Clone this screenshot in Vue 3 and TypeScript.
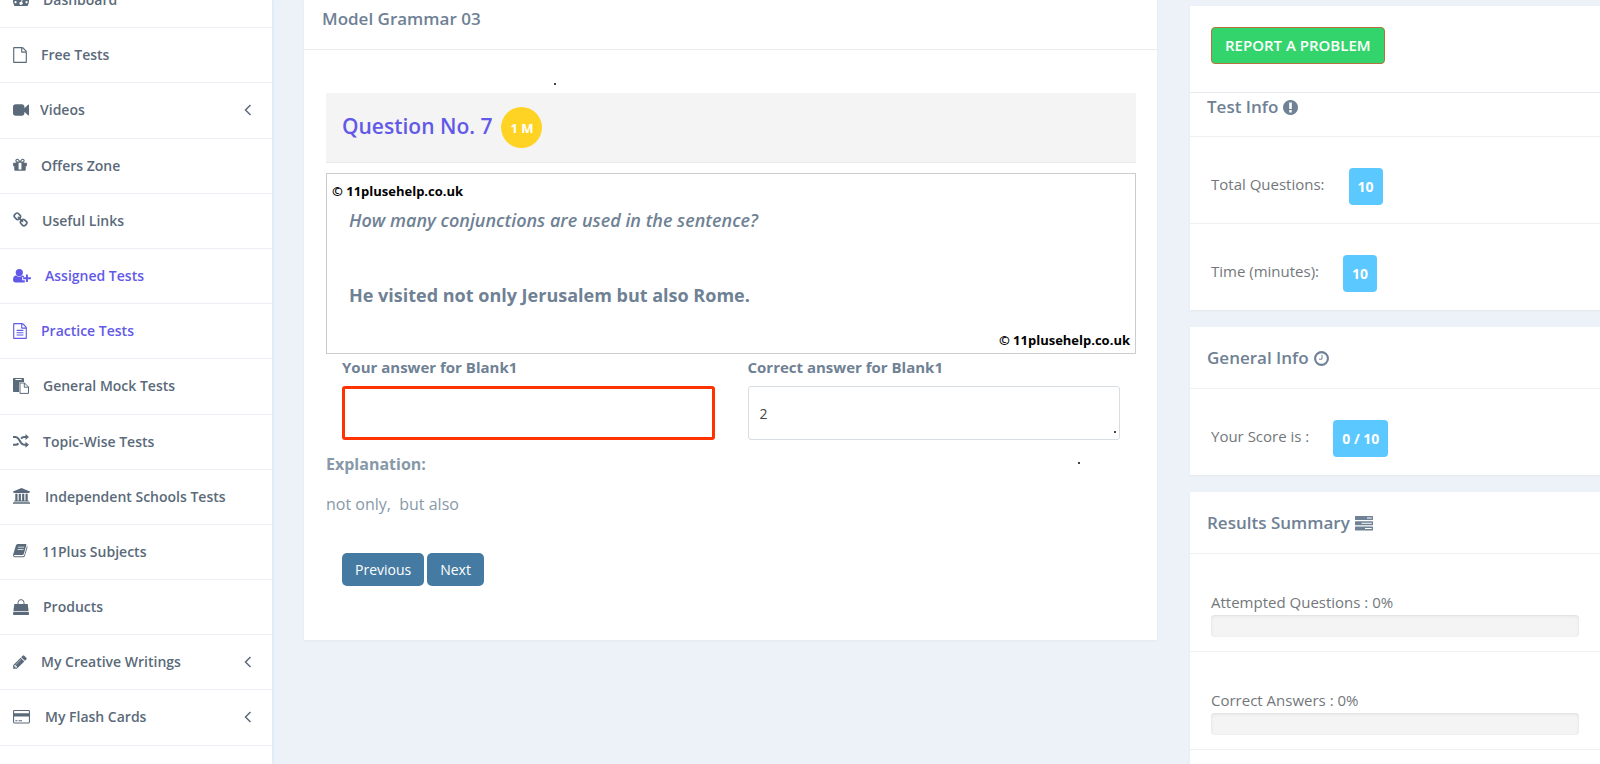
<script setup lang="ts">
interface Shape {
  d: string
  stroke?: number
}
interface MenuItem {
  label: string
  size: string
  box: string
  shapes: Shape[]
  active?: boolean
  expandable?: boolean
  tight?: boolean
}

const page =
  'M1596 380q28 28 48 76t20 88v1152q0 40-28 68t-68 28h-1344q-40 0-68-28t-28-68v-1600q0-40 28-68t68-28h896q40 0 88 20t76 48zm-444-244v376h376q-10-29-22-41l-313-313q-12-12-41-22zm384 1528v-1024h-416q-40 0-68-28t-28-68v-416h-768v1536h1280z'

const menu: MenuItem[] = [
  {
    label: 'Dashboard',
    size: 'w16',
    box: '0 0 16 16',
    shapes: [{ d: 'M8 1a8 8 0 0 0-8 8q0 2.400 1.200 4.400.3.600.8.600h12q.5 0 .8-.6 1.200-2 1.200-4.400a8 8 0 0 0-8-8zM2.500 9a1.100 1.100 0 1 0 .1 0zM4 5a1.100 1.100 0 1 0 .1 0zM8 2.800a1.100 1.100 0 1 0 .1 0zM12 5a1.100 1.100 0 1 0 .1 0zM13.500 9a1.100 1.100 0 1 0 .1 0zM9 6.500l-.8 3.200a1.600 1.600 0 1 0 .8.300l1-3.200z' }],
  },
  { label: 'Free Tests', size: 'w14', box: '128 0 1536 1792', shapes: [{ d: page }] },
  {
    label: 'Videos',
    size: 'w16',
    box: '0 0 1792 1792',
    tight: true,
    expandable: true,
    shapes: [{ d: 'M1792 352v1088q0 42-39 59-13 5-25 5-27 0-45-19l-403-403v166q0 119-84.500 203.500t-203.500 84.500h-704q-119 0-203.500-84.500t-84.500-203.500v-704q0-119 84.500-203.500t203.500-84.500h704q119 0 203.500 84.500t84.500 203.500v165l403-402q18-19 45-19 12 0 25 5 39 17 39 59z' }],
  },
  {
    label: 'Offers Zone',
    size: 'w14',
    box: '128 0 1536 1792',
    shapes: [{ d: 'M1056 1356v-716h-320v716q0 25 18 38.500t46 13.500h192q28 0 46-13.500t18-38.500zm-456-844h195l-126-161q-26-31-69-31-40 0-68 28t-28 68 28 68 68 28zm688-96q0-40-28-68t-68-28q-43 0-69 31l-125 161h194q40 0 68-28t28-68zm376 256v320q0 14-9 23t-23 9h-96v416q0 40-28 68t-68 28h-1088q-40 0-68-28t-28-68v-416h-96q-14 0-23-9t-9-23v-320q0-14 9-23t23-9h440q-93 0-158.500-65.500t-65.500-158.500 65.500-158.500 158.500-65.500q107 0 168 77l128 165 128-165q61-77 168-77 93 0 158.500 65.500t65.500 158.500-65.500 158.500-158.500 65.500h440q14 0 23 9t9 23z' }],
  },
  {
    label: 'Useful Links',
    size: 'w15',
    box: '80 0 1632 1792',
    shapes: [{ d: 'M1520 1216q0-40-28-68l-208-208q-28-28-68-28-42 0-72 32 3 3 19 18.500t21.500 21.500 15 19 13 25.500 3.500 27.500q0 40-28 68t-68 28q-15 0-27.500-3.500t-25.500-13-19-15-21.500-21.500-18.500-19q-33 31-33 73 0 40 28 68l206 207q27 27 68 27 40 0 68-26l147-146q28-28 28-67zm-703-705q0-40-28-68l-206-207q-28-28-68-28-39 0-68 27l-147 146q-28 28-28 67 0 40 28 68l208 208q27 27 68 27 42 0 72-31-3-3-19-18.500t-21.500-21.500-15-19-13-25.500-3.500-27.500q0-40 28-68t68-28q15 0 27.500 3.500t25.500 13 19 15 21.500 21.500 18.500 19q33-31 33-73zm895 705q0 120-85 203l-147 146q-83 83-203 83-121 0-204-85l-206-207q-83-83-83-203 0-123 88-209l-88-88q-86 88-208 88-120 0-204-84l-208-208q-84-84-84-204t85-203l147-146q83-83 203-83 121 0 204 85l206 207q83 83 83 203 0 123-88 209l88 88q86-88 208-88 120 0 204 84l208 208q84 84 84 204z' }],
  },
  {
    label: 'Assigned Tests',
    size: 'w18',
    box: '0 0 18 16',
    active: true,
    shapes: [
      { d: 'M6.300 1a3.600 3.600 0 1 1 0 7.200 3.600 3.600 0 0 1 0-7.200zM3.200 7.600q1.400 1.200 3.100 1.200t3.100-1.200q1 0 1.700.6V9H9.200v3.300h2.600v1.900q-.4.200-.9.200H2.300Q0 14.400 0 12q0-4.300 3.200-4.400z' },
      { d: 'M12.900 6.600h2v2.700h3v2h-3V14h-2v-2.700h-2.800v-2h2.800z' },
    ],
  },
  {
    label: 'Practice Tests',
    size: 'w14',
    box: '128 0 1536 1792',
    active: true,
    shapes: [{ d: page + 'm-1024-864q0-14 9-23t23-9h704q14 0 23 9t9 23v64q0 14-9 23t-23 9h-704q-14 0-23-9t-9-23v-64zm736 224q14 0 23 9t9 23v64q0 14-9 23t-23 9h-704q-14 0-23-9t-9-23v-64q0-14 9-23t23-9h704zm0 256q14 0 23 9t9 23v64q0 14-9 23t-23 9h-704q-14 0-23-9t-9-23v-64q0-14 9-23t23-9h704z' }],
  },
  {
    label: 'General Mock Tests',
    size: 'w16',
    box: '0 0 16 16',
    shapes: [
      { d: 'M.8 0h9.400q.8 0 .8.800V4H7.500q-1.500 0-1.500 1.500V14H.8Q0 14 0 13.200V.8Q0 0 .8 0zM2.400 1v1h6.200V1z' },
      { d: 'M7 5h4.500l4 4v6.400H7zM11.300 5v4.200h4.200', stroke: 1 },
    ],
  },
  {
    label: 'Topic-Wise Tests',
    size: 'w16',
    box: '0 0 16 16',
    shapes: [
      { d: 'M0 4h2.500q2 0 3.300 2.200L7.800 9.600Q9 11.800 11.200 11.800H13M0 11.800h2.500q1.700 0 2.900-1.500M8.100 5.700Q9.300 4 11.200 4H13', stroke: 2 },
      { d: 'M12.500 1l3.500 3-3.500 3zM12.500 8.800l3.500 3-3.500 3z' },
    ],
  },
  {
    label: 'Independent Schools Tests',
    size: 'w18',
    box: '0 0 18 16',
    shapes: [{ d: 'M8.500 0L17 3.400v1.200h-1.100q0 .5-.6.500H1.700q-.6 0-.6-.5H0V3.400zM2.300 5.700h2.200v6.800h1.200V5.700h2.200v6.800h1.200V5.700h2.200v6.800h1.200V5.700h2.200v6.800h.6q.6 0 .6.600v.5H1.100v-.5q0-.6.6-.6h.6zM.6 14.200h15.800q.6 0 .6.500v1.100H0v-1.100q0-.5.6-.5z' }],
  },
  {
    label: '11Plus Subjects',
    size: 'w15',
    box: '0 0 15 16',
    shapes: [
      { d: 'M4.700 1h8q1 0 .7 1.100L10.800 11q-.3 1-1.400 1H1.700q-.7 0-.8.500.1.800 1 .8h8.300q.7 0 1-.8L14 3q.8.400.5 1.300L11.900 13q-.4 1.300-1.700 1.300H2q-1.400 0-1.900-1.500-.1-.5 0-1.100L2.900 2.600Q3.300 1 4.700 1zM5.300 3.700l-.3.900h6l.3-.9zM4.700 5.900l-.3.900h6l.3-.9z' },
    ],
  },
  {
    label: 'Products',
    size: 'w16',
    box: '0 0 16 16',
    shapes: [
      { d: 'M1.300 5h13.400l.9 7.300H.4zM.3 13h15.400l.3 2q0 .9-.7.900H.7Q0 15.900 0 15z' },
      { d: 'M5 7V3.700Q5 .6 8 .6t3 3.100V7', stroke: 1 },
    ],
  },
  {
    label: 'My Creative Writings',
    size: 'w14',
    box: '128 0 1536 1792',
    expandable: true,
    shapes: [{ d: 'M491 1536l91-91-235-235-91 91v107h128v128h107zm523-928q0-22-22-22-10 0-17 7l-542 542q-7 7-7 17 0 22 22 22 10 0 17-7l542-542q7-7 7-17zm-54-192l416 416-832 832h-416v-416zm683 96q0 53-37 90l-166 166-416-416 166-165q36-38 90-38 53 0 91 38l235 234q37 39 37 91z' }],
  },
  {
    label: 'My Flash Cards',
    size: 'w18',
    box: '0 0 18 16',
    expandable: true,
    shapes: [
      { d: 'M1.400 1h14.200q1.400 0 1.400 1.400v10.700q0 1.400-1.400 1.400H1.400Q0 14.500 0 13.100V2.400Q0 1 1.400 1zM1.400 2.100q-.3 0-.3.300v1.900h14.800V2.400q0-.3-.3-.3zM1.100 7.400v5.700q0 .3.300.3h14.200q.3 0 .3-.3V7.400zM2.300 11.200h2.200v1.100H2.300zM5.600 11.200H9v1.100H5.600z' },
    ],
  },
]

const facts = [
  { label: 'Total Questions:', value: '10' },
  { label: 'Time (minutes):', value: '10' },
]
const results = [
  { label: 'Attempted Questions', percent: 0 },
  { label: 'Correct Answers', percent: 0 },
]
</script>

<template>
  <div class="layout">
    <nav class="sidebar">
      <ul class="menu">
        <li v-for="item in menu" :key="item.label">
          <a href="#" :class="['link', { active: item.active, tight: item.tight }]">
            <svg :class="['icon', item.size]" :viewBox="item.box" aria-hidden="true">
              <path
                v-for="(shape, i) in item.shapes"
                :key="i"
                :d="shape.d"
                :fill="shape.stroke ? 'none' : 'currentColor'"
                :stroke="shape.stroke ? 'currentColor' : 'none'"
                :stroke-width="shape.stroke"
                fill-rule="evenodd"
              />
            </svg>
            <span>{{ item.label }}</span>
            <svg v-if="item.expandable" class="chevron" viewBox="0 0 8 12" aria-hidden="true">
              <path d="M6.500 1L1.500 6l5 5" fill="none" stroke="currentColor" stroke-width="1.500" />
            </svg>
          </a>
        </li>
      </ul>
    </nav>

    <div class="content">
      <main class="panel exam">
        <h1 class="title">Model Grammar 03</h1>
        <div class="exam-body">
          <header class="question-head">
            <h2>Question No. 7</h2>
            <span class="marks">1 M</span>
            <i class="speck speck-top"></i>
          </header>

          <section class="question">
            <p class="mark-line">© 11plusehelp.co.uk</p>
            <p class="prompt">How many conjunctions are used in the sentence?</p>
            <p class="sentence">He visited not only Jerusalem but also Rome.</p>
            <p class="mark-line end">© 11plusehelp.co.uk</p>
          </section>

          <div class="answers">
            <div class="field">
              <label for="given">Your answer for Blank1</label>
              <input id="given" class="wrong" type="text" />
            </div>
            <div class="field">
              <label for="correct">Correct answer for Blank1</label>
              <input id="correct" type="text" value="2" readonly />
              <i class="speck speck-field"></i>
            </div>
          </div>

          <section class="explanation">
            <h3>Explanation:</h3>
            <p>not only,&nbsp; but also</p>
            <i class="speck speck-note"></i>
          </section>

          <div class="pager">
            <button type="button">Previous</button>
            <button type="button">Next</button>
          </div>
        </div>
      </main>

      <aside class="side">
        <section class="panel">
          <div class="report">
            <button type="button">REPORT A PROBLEM</button>
          </div>
          <h2 class="side-title compact">
            Test Info
            <svg class="w15" viewBox="128 128 1536 1536" aria-hidden="true">
              <path
                fill="currentColor"
                d="M896 128q209 0 385.500 103t279.500 279.500 103 385.500-103 385.500-279.500 279.500-385.500 103-385.500-103-279.500-279.500-103-385.500 103-385.500 279.500-279.500 385.500-103zm128 1247v-190q0-14-9-23.500t-22-9.500h-192q-13 0-23 10t-10 23v190q0 13 10 23t23 10h192q13 0 22-9.500t9-23.500zm-2-344l18-621q0-12-10-18-10-8-24-8h-220q-14 0-24 8-10 6-10 18l17 621q0 10 10 17.500t24 7.500h185q14 0 23.500-7.500t10.500-17.500z"
              />
            </svg>
          </h2>
          <div v-for="fact in facts" :key="fact.label" class="row">
            <span class="name">{{ fact.label }}</span>
            <span class="badge">{{ fact.value }}</span>
          </div>
        </section>

        <section class="panel">
          <h2 class="side-title">
            General Info
            <svg class="w15" viewBox="0 0 15 15" aria-hidden="true">
              <circle cx="7.500" cy="7.500" r="6.400" fill="none" stroke="currentColor" stroke-width="2.100" />
              <path d="M8 3.800v4.400H5" fill="none" stroke="currentColor" stroke-width="1" />
            </svg>
          </h2>
          <div class="row">
            <span class="name">Your Score is :</span>
            <span class="badge">0 / 10</span>
          </div>
        </section>

        <section class="panel">
          <h2 class="side-title">
            Results Summary
            <svg class="w18" viewBox="0 0 18 15" aria-hidden="true">
              <path
                fill="currentColor"
                fill-rule="evenodd"
                d="M.6 0h16.800q.6 0 .6.600v2.800q0 .6-.6.600H.6Q0 4 0 3.400V.6Q0 0 .6 0zM12 1.500v1h4.800v-1zM.6 5.300h16.800q.6 0 .6.600v2.800q0 .6-.6.600H.6Q0 9.300 0 8.700V5.900q0-.6.6-.6zM6.500 6.800v1h10.300v-1zM.6 10.600h16.800q.6 0 .6.600V14q0 .6-.6.600H.6Q0 14.600 0 14v-2.800q0-.6.6-.6zM10 12.100v1h6.800v-1z"
              />
            </svg>
          </h2>
          <div v-for="result in results" :key="result.label" class="result">
            <span>{{ result.label }} : {{ result.percent }}%</span>
            <div class="track"><div class="fill" :style="{ width: result.percent + '%' }"></div></div>
          </div>
          <div class="result"></div>
        </section>
      </aside>
    </div>
  </div>
</template>

<style>
body {
  margin: 0;
  background: #edf2f9;
}
</style>

<style scoped>
.layout {
  display: flex;
  height: 100vh;
  overflow: hidden;
  font-family: 'Open Sans', 'Noto Sans', sans-serif;
  font-size: 16px;
  color: #6f8194;
}
h1, h2, h3, p, ul { margin: 0; padding: 0; }
svg { flex: none; height: 16px; }
.w14 { width: 14px; }
.w15 { width: 15px; }
.w16 { width: 16px; }
.w18 { width: 18px; }

.sidebar {
  flex: none;
  width: 272px;
  background: #fff;
  box-shadow: 0 0 4px #cfe0f0;
}
.menu { margin-top: -27px; list-style: none; }
.link {
  display: flex;
  align-items: center;
  gap: 14px;
  padding: 14px 20px 15px 13px;
  border-bottom: 1px solid #ebeff3;
  color: #5a6a7a;
  font-size: 14px;
  font-weight: 600;
  line-height: 1.8;
  text-decoration: none;
}
.link.active { color: #6259e8; }
.link.tight { gap: 11px; }
.chevron { width: 8px; height: 12px; margin-left: auto; }

.content {
  flex: 1;
  display: grid;
  grid-template-columns: minmax(0, 853fr) minmax(0, 410fr);
  gap: 33px;
  align-items: start;
  padding-left: 32px;
}
.panel {
  background: #fff;
  box-shadow: 0 1px 2px #e3e8ec;
}
.title {
  padding: 5px 18px 16px;
  border-bottom: 1px solid #e9ebed;
  font-size: 17px;
  font-weight: 600;
  line-height: 28px;
}
.exam-body { padding: 43px 21px 54px 22px; }
.question-head {
  position: relative;
  display: flex;
  align-items: center;
  gap: 9px;
  height: 69px;
  padding-left: 16px;
  border-bottom: 1px solid #e6e9ec;
  background: #f4f4f4;
}
.question-head h2 {
  padding-bottom: 4px;
  color: #6259e8;
  font-size: 21px;
  font-weight: 600;
}
.marks {
  display: grid;
  place-items: center;
  width: 41px;
  height: 41px;
  border-radius: 50%;
  background: #ffd324;
  color: #fff;
  font-size: 13px;
  font-weight: 700;
}
.speck {
  position: absolute;
  width: 2px;
  height: 2px;
  background: #444;
}
.speck-top { top: -10px; left: 228px; }
.speck-field { right: 4px; bottom: 7px; }
.speck-note { top: 22px; right: 56px; }

.question {
  margin-top: 10px;
  padding: 7px 5px 3px;
  border: 1px solid #ccc;
}
.mark-line {
  color: #000;
  font-size: 13px;
  font-weight: 700;
  line-height: 20px;
}
.mark-line.end { text-align: right; }
.prompt, .sentence {
  padding-left: 17px;
  font-size: 18px;
  line-height: 38px;
}
.prompt { font-style: italic; font-weight: 600; }
.sentence { padding-top: 37px; padding-bottom: 16px; font-weight: 700; }

.answers {
  display: grid;
  grid-template-columns: 1fr 1fr;
  gap: 33px;
  padding: 0 16px;
}
.field { position: relative; display: flex; flex-direction: column; }
.field label {
  padding-bottom: 6px;
  font-size: 15px;
  font-weight: 700;
  line-height: 26px;
}
.field input {
  box-sizing: border-box;
  width: 100%;
  height: 54px;
  padding: 0 11px;
  border: 1px solid #d8dde3;
  border-radius: 3px;
  background: #fff;
  color: #444;
  font: inherit;
  font-size: 14px;
}
.field .wrong { border: 3px solid #ff3300; }

.explanation { position: relative; padding-top: 11px; color: #8799a8; }
.explanation h3 { font-size: 16px; font-weight: 700; line-height: 26px; }
.explanation p { padding-top: 14px; line-height: 26px; }

.pager { display: flex; gap: 3px; padding: 36px 16px 0; }
.pager button {
  height: 33px;
  padding: 0 13px;
  border: 0;
  border-radius: 5px;
  background: #457ba3;
  color: #fff;
  font: inherit;
  font-size: 14px;
}

.side { display: flex; flex-direction: column; gap: 17px; padding-top: 6px; }
.report { padding: 21px 21px 28px; border-bottom: 1px solid #e6e9ee; }
.report button {
  display: block;
  height: 37px;
  padding: 0 13px 2px;
  border: 1px solid #b5713f;
  border-radius: 4px;
  background: #33d46c;
  color: #fff;
  font: inherit;
  font-size: 15px;
  font-weight: 600;
}
.side-title {
  display: flex;
  align-items: center;
  gap: 5px;
  padding: 17px 17px 16px;
  border-bottom: 1px solid #eef0f4;
  font-size: 17px;
  font-weight: 600;
  line-height: 28px;
}
.side-title svg { height: 15px; }
.side-title.compact { padding-top: 0; padding-bottom: 15px; }
.row {
  display: flex;
  align-items: flex-start;
  gap: 24px;
  padding: 31px 21px 18px;
}
.row + .row { border-top: 1px solid #eef0f4; }
.row, .result { color: #73777b; font-size: 15px; }
.name { line-height: 32px; }
.badge {
  padding: 0 9px;
  border-radius: 4px;
  background: #5bc8ff;
  color: #fff;
  font-size: 14px;
  font-weight: 700;
  line-height: 37px;
}
.result { padding: 36px 21px 14px; border-bottom: 1px solid #eef0f4; }
.result span { display: block; line-height: 25px; }
.track {
  height: 22px;
  overflow: hidden;
  border-radius: 4px;
  background: #f4f4f4;
  box-shadow: inset 0 1px 3px #dcdcdc;
}
.fill { height: 100%; background: #5bc8ff; }
</style>
